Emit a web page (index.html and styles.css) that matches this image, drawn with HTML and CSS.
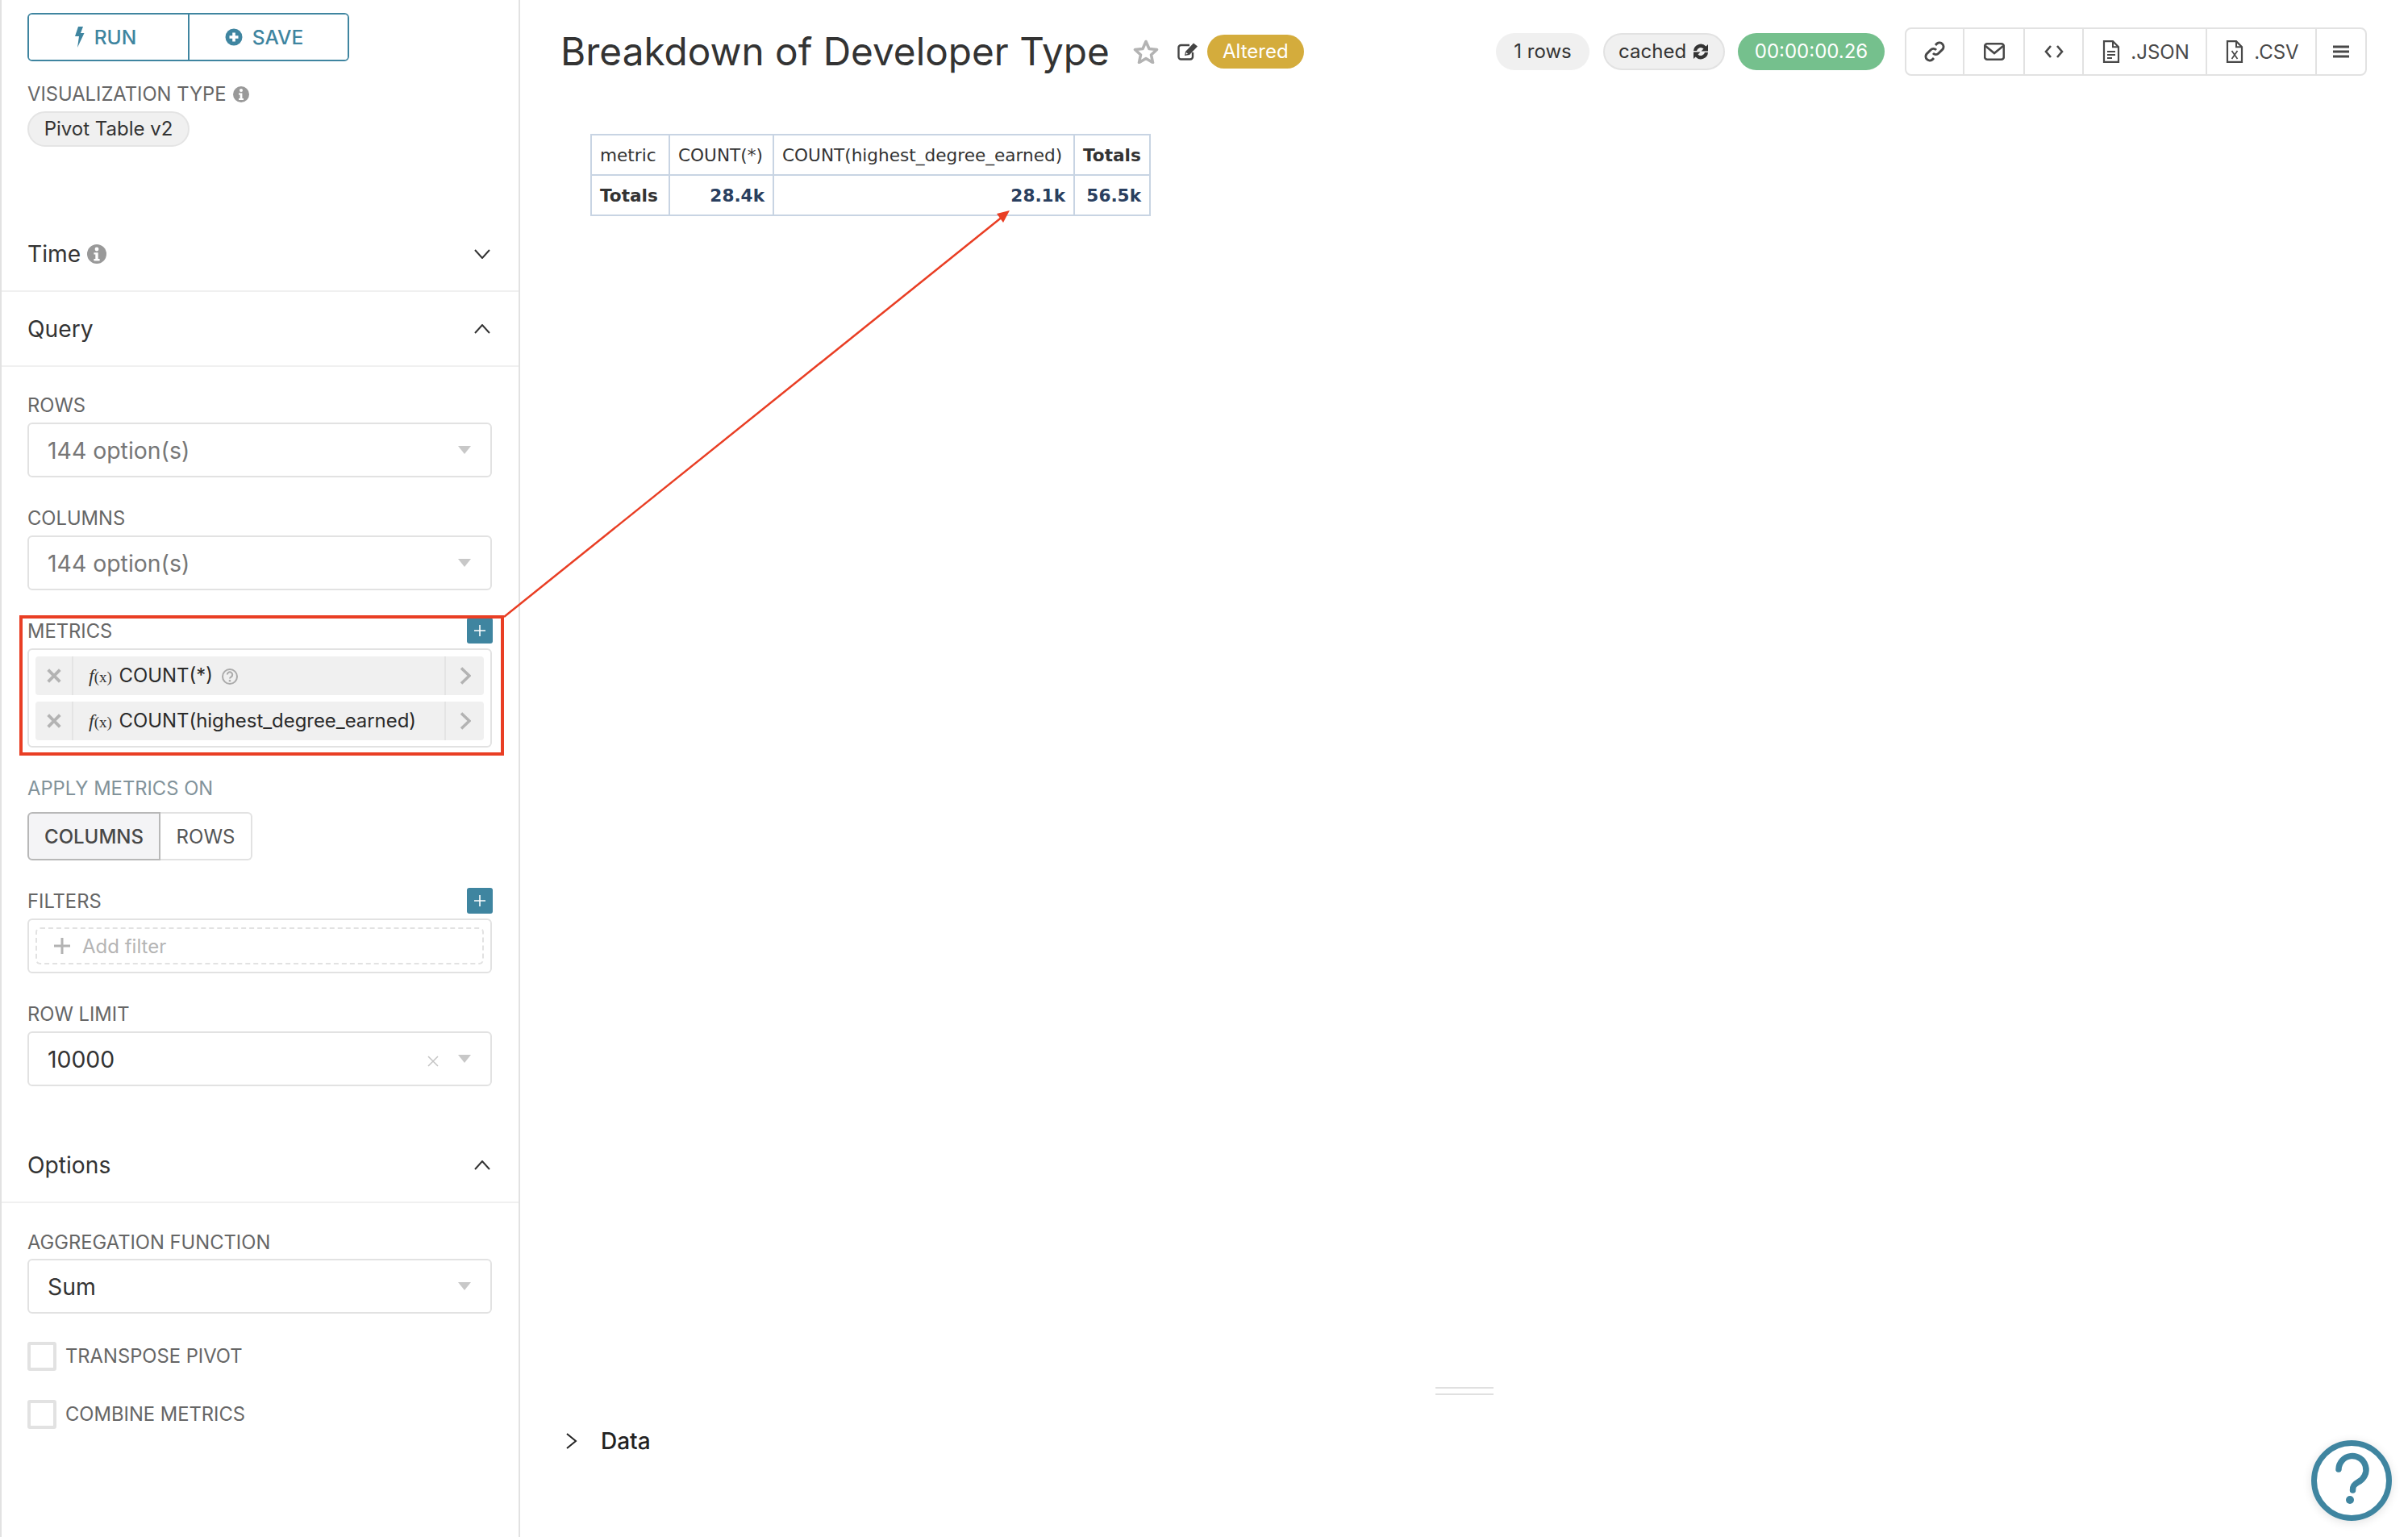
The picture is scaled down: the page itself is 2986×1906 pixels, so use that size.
FILE: index.html
```html
<!DOCTYPE html>
<html lang="en">
<head>
<meta charset="utf-8">
<title>Breakdown of Developer Type</title>
<link rel="stylesheet" href="styles.css">
</head>
<body>
<div class="app">
  <aside class="sidebar">
    <div class="run-group">
      <button class="run-btn run-btn-run">
        <svg class="i-bolt" viewBox="0 0 14 28"><path d="M6 1 L12 1 L9 9 L13.500 9 L5 27 L7 13 L2 13 Z" fill="#3f85a0"/></svg>
        RUN
      </button>
      <button class="run-btn run-btn-save">
        <svg class="i-plus-c" viewBox="0 0 22 22"><circle cx="11" cy="11" r="10.500" fill="#3f85a0"/><path d="M11 5.500v11M5.500 11h11" stroke="#fff" stroke-width="3.600"/></svg>
        SAVE
      </button>
    </div>

    <div class="viz">
      <div class="label">VISUALIZATION TYPE
        <svg class="i-info" viewBox="0 0 20 20"><circle cx="10" cy="10" r="10" fill="#999"/><circle cx="10" cy="5" r="2" fill="#fff"/><path d="M7 8.500h4.400v6.500h1.600v2H7v-2h1.600v-4.500H7z" fill="#fff"/></svg>
      </div>
      <div class="chip">Pivot Table v2</div>
    </div>

    <div class="section-head time-head">
      <span class="section-title">Time <svg class="i-info i-info-lg" viewBox="0 0 20 20"><circle cx="10" cy="10" r="10" fill="#999"/><circle cx="10" cy="5" r="2" fill="#fff"/><path d="M7 8.500h4.400v6.500h1.600v2H7v-2h1.600v-4.500H7z" fill="#fff"/></svg></span>
      <svg class="i-chev" viewBox="0 0 20 12"><path d="M1 1l9 10 9-10" fill="none" stroke="#333" stroke-width="2"/></svg>
    </div>
    <div class="section-head">
      <span class="section-title">Query</span>
      <svg class="i-chev" viewBox="0 0 20 12"><path d="M1 11l9-10 9 10" fill="none" stroke="#333" stroke-width="2"/></svg>
    </div>

    <div class="section-body query-body">
      <div class="field">
        <div class="label">ROWS</div>
        <div class="select muted"><span>144 option(s)</span><i class="caret"></i></div>
      </div>
      <div class="field">
        <div class="label">COLUMNS</div>
        <div class="select muted"><span>144 option(s)</span><i class="caret"></i></div>
      </div>
      <div class="field field-plus">
        <div class="label-row">
          <div class="label">METRICS</div>
          <div class="plus-btn"><svg viewBox="0 0 16 16"><path d="M8 1v14M1 8h14" stroke="#fff" stroke-width="1.600"/></svg></div>
        </div>
        <div class="metric-box">
          <div class="metric">
            <div class="metric-x"><svg viewBox="0 0 16 16"><path d="M1.500 1.500l13 13M14.500 1.500l-13 13" stroke="#b3b3b3" stroke-width="3.400"/></svg></div>
            <div class="metric-name"><span class="fx"><em>f</em>(x)</span> COUNT(*)
              <svg class="i-help" viewBox="0 0 20 20"><circle cx="10" cy="10" r="9" fill="none" stroke="#aaa" stroke-width="2"/><path d="M6.800 7.600a3.200 3.200 0 1 1 4.900 2.700c-1 .6-1.700 1.100-1.700 2.300" fill="none" stroke="#aaa" stroke-width="2"/><circle cx="10" cy="15.200" r="1.300" fill="#aaa"/></svg>
            </div>
            <div class="metric-more"><svg viewBox="0 0 14 22"><path d="M2 1.500l10 9.500-10 9.500" fill="none" stroke="#b3b3b3" stroke-width="3.600"/></svg></div>
          </div>
          <div class="metric">
            <div class="metric-x"><svg viewBox="0 0 16 16"><path d="M1.500 1.500l13 13M14.500 1.500l-13 13" stroke="#b3b3b3" stroke-width="3.400"/></svg></div>
            <div class="metric-name"><span class="fx"><em>f</em>(x)</span> COUNT(highest_degree_earned)</div>
            <div class="metric-more"><svg viewBox="0 0 14 22"><path d="M2 1.500l10 9.500-10 9.500" fill="none" stroke="#b3b3b3" stroke-width="3.600"/></svg></div>
          </div>
        </div>
      </div>
      <div class="field field-apply">
        <div class="label label-blue">APPLY METRICS ON</div>
        <div class="toggle">
          <div class="toggle-item active">COLUMNS</div>
          <div class="toggle-item">ROWS</div>
        </div>
      </div>
      <div class="field field-plus">
        <div class="label-row">
          <div class="label">FILTERS</div>
          <div class="plus-btn"><svg viewBox="0 0 16 16"><path d="M8 1v14M1 8h14" stroke="#fff" stroke-width="1.600"/></svg></div>
        </div>
        <div class="filter-box">
          <div class="filter-add">
            <svg class="i-add" viewBox="0 0 20 20"><path d="M10 0v20M0 10h20" stroke="#b3b3b3" stroke-width="3"/></svg>
            Add filter
          </div>
        </div>
      </div>
      <div class="field">
        <div class="label">ROW LIMIT</div>
        <div class="select"><span>10000</span>
          <svg class="i-clear" viewBox="0 0 14 14"><path d="M1 1l12 12M13 1L1 13" stroke="#c4c4c4" stroke-width="1.500"/></svg>
          <i class="caret"></i></div>
      </div>
    </div>

    <div class="section-head">
      <span class="section-title">Options</span>
      <svg class="i-chev" viewBox="0 0 20 12"><path d="M1 11l9-10 9 10" fill="none" stroke="#333" stroke-width="2"/></svg>
    </div>

    <div class="section-body options-body">
      <div class="field">
        <div class="label label-tight">AGGREGATION FUNCTION</div>
        <div class="select"><span>Sum</span><i class="caret"></i></div>
      </div>
      <div class="check first"><i class="box"></i><span class="label">TRANSPOSE PIVOT</span></div>
      <div class="check"><i class="box"></i><span class="label">COMBINE METRICS</span></div>
    </div>
  </aside>

  <main class="main">
    <header class="head">
      <div class="head-left">
        <h1 class="title">Breakdown of Developer Type</h1>
        <svg class="i-star" viewBox="0 0 32 30"><path d="M16 2.500l4 9 9.500 1-7 6.500 2 9.500-8.500-5-8.500 5 2-9.500-7-6.500 9.500-1z" fill="none" stroke="#b3b3b3" stroke-width="3.600" stroke-linejoin="round"/></svg>
        <svg class="i-edit" viewBox="0 0 28 22"><path d="M19 12v5.500a3 3 0 0 1-3 3H4.500a3 3 0 0 1-3-3V6a3 3 0 0 1 3-3H15" fill="none" stroke="#444" stroke-width="2.400"/><path d="M9 16l1-5L20 .5l5 4L15 15z" fill="#444"/><path d="M10.500 14.500l.5-2.500 2 1.800z" fill="#fff"/></svg>
        <span class="altered">Altered</span>
      </div>
      <div class="head-right">
        <span class="pill pill-rows">1 rows</span>
        <span class="pill pill-cached">cached
          <svg class="i-refresh" viewBox="0 0 22 22"><path d="M2 10a9 9 0 0 1 15.500-5.500L20 2v8.500h-8.500l3-3A5 5 0 0 0 6 10zM20 12a9 9 0 0 1-15.500 5.500L2 20v-8.500h8.500l-3 3A5 5 0 0 0 16 12z" fill="#333"/></svg>
        </span>
        <span class="pill pill-time">00:00:00.26</span>
        <div class="actions">
          <div class="action a-link"><svg class="i-a" viewBox="0 0 26 26"><path d="M11 15a5 5 0 0 0 7 0l5-5a5 5 0 0 0-7-7l-2 2M15 11a5 5 0 0 0-7 0l-5 5a5 5 0 0 0 7 7l2-2" fill="none" stroke="#484848" stroke-width="3"/></svg></div>
          <div class="action a-mail"><svg class="i-a" viewBox="0 0 26 22"><rect x="1.200" y="1.200" width="23.600" height="19.600" rx="3" fill="none" stroke="#484848" stroke-width="2.600"/><path d="M2 4l11 9 11-9" fill="none" stroke="#484848" stroke-width="2.600"/></svg></div>
          <div class="action a-code"><svg class="i-code" viewBox="0 0 24 16"><path d="M8 1L2 8l6 7M16 1l6 7-6 7" fill="none" stroke="#484848" stroke-width="2.600"/></svg></div>
          <div class="action a-json"><svg class="i-file" viewBox="0 0 22 28"><path d="M2 1.200h11l7 7V26.800H2z" fill="none" stroke="#484848" stroke-width="2.200"/><path d="M13 1.200v7h7" fill="none" stroke="#484848" stroke-width="2"/><path d="M6 14h10M6 18h10M6 22h6" stroke="#484848" stroke-width="2"/></svg>.JSON</div>
          <div class="action a-csv"><svg class="i-file" viewBox="0 0 22 28"><path d="M2 1.200h11l7 7V26.800H2z" fill="none" stroke="#484848" stroke-width="2.200"/><path d="M13 1.200v7h7" fill="none" stroke="#484848" stroke-width="2"/><path d="M7.500 13l7 10M14.500 13l-7 10" stroke="#484848" stroke-width="1.700"/></svg>.CSV</div>
          <div class="action a-menu"><svg class="i-bars" viewBox="0 0 20 16"><path d="M0 2h20M0 8h20M0 14h20" stroke="#484848" stroke-width="3"/></svg></div>
        </div>
      </div>
    </header>

    <section class="chart">
      <table class="pivot">
        <tr><th class="c1">metric</th><th class="c2">COUNT(*)</th><th class="c3">COUNT(highest_degree_earned)</th><th class="strong c4">Totals</th></tr>
        <tr><th class="strong">Totals</th><td>28.4k</td><td>28.1k</td><td>56.5k</td></tr>
      </table>
    </section>

    <div class="resize"><i></i><i></i></div>
    <div class="data">
      <svg class="i-data" viewBox="0 0 14 20"><path d="M1 1l11 9-11 9" fill="none" stroke="#222" stroke-width="2"/></svg>
      <span>Data</span>
    </div>
  </main>
</div>

<div class="annot-box"></div>
<svg class="annot-arrow" viewBox="0 0 2986 1906"><path d="M625 765L1244 268" fill="none" stroke="#e93e24" stroke-width="2.500"/><path d="M1252 261L1236 265L1244 276Z" fill="#e93e24"/></svg>

<div class="help">
  <svg viewBox="0 0 100 100"><circle cx="50" cy="50" r="46.500" fill="#fff" stroke="#3f85a0" stroke-width="7"/><path d="M34 36a17 17 0 1 1 24 16c-5 3-6.500 5-6.500 10" fill="none" stroke="#3f85a0" stroke-width="7.500" stroke-linecap="round"/><circle cx="48" cy="74" r="5" fill="#3f85a0"/></svg>
</div>
</body>
</html>
```

FILE: styles.css
```css
* { box-sizing: border-box; }
html, body { margin: 0; padding: 0; background: #fff; }
body { width: 2986px; height: 1906px; overflow: hidden; font-family: Inter, "Liberation Sans", sans-serif; color: #333; position: relative; }
.app { display: flex; height: 1906px; }

/* sidebar */
.sidebar { width: 645px; flex: none; height: 1906px; border-left: 2px solid #e2e2e2; border-right: 2px solid #e2e2e2; padding-top: 16px; }
.run-group { margin-left: 32px; width: 399px; height: 60px; display: flex; border: 2px solid #3f85a0; border-radius: 6px; }
.run-btn { flex: none; height: 100%; background: #fff; border: 0; border-radius: 4px; color: #3f85a0; font: 500 24.5px Inter, sans-serif; display: flex; align-items: center; justify-content: center; gap: 12px; padding: 0; }
.run-btn-run { border-right: 2px solid #3f85a0; width: 199px; border-radius: 4px 0 0 4px; padding-right: 9px; }
.run-btn-save { width: 196px; border-radius: 0 4px 4px 0; padding-right: 11px; }
.i-bolt { width: 14px; height: 28px; }
.i-plus-c { width: 22px; height: 22px; }
.viz { margin: 26px 0 0 32px; height: 167px; }
.label { font-size: 23.75px; line-height: 30px; color: #666; font-weight: 400; white-space: nowrap; }
.i-info { width: 20px; height: 20px; vertical-align: -2px; margin-left: 2px; }
.i-info-lg { width: 24px; height: 24px; vertical-align: -2px; margin-left: 0; }
.chip { margin-top: 6px; width: 201px; height: 44px; border-radius: 22px; background: #f0f0f0; border: 2px solid #e4e4e4; font-size: 24px; line-height: 40px; color: #333; text-align: center; }
.section-head { height: 93px; border-bottom: 2px solid #f0f0f0; padding: 0 32px; display: flex; align-items: center; justify-content: space-between; }
.section-title { font-size: 28.2px; color: #333; }
.i-chev { width: 20px; height: 12px; margin-right: 3px; }
.section-body { padding: 0 32px; }
.query-body { padding-top: 33px; padding-bottom: 52px; }
.field { margin-bottom: 36px; }
.field:last-child { margin-bottom: 0; }
.field > .label { margin-bottom: 6px; }
.field-plus { margin-bottom: 36px; margin-top: -2px; }
.label-row { display: flex; justify-content: space-between; align-items: flex-end; height: 32px; margin-bottom: 6px; }
.plus-btn { width: 32px; height: 32px; background: #3f85a0; border-radius: 3px; display: flex; align-items: center; justify-content: center; }
.plus-btn svg { width: 16px; height: 16px; }
.select { height: 68px; width: 576px; border: 2px solid #e2e2e2; border-radius: 6px; display: flex; align-items: center; padding: 0 24px 0 23px; font-size: 28.4px; color: #333; position: relative; }
.select span { flex: 1; }
.select.muted { color: #777; }
.caret { width: 0; height: 0; border-left: 8px solid transparent; border-right: 8px solid transparent; border-top: 10px solid #c8c8c8; }
.i-clear { width: 14px; height: 14px; margin: 6px 24px 0 0; }
.metric-box { width: 576px; height: 123px; border: 2px solid #e2e2e2; border-radius: 6px; padding: 8px; display: flex; flex-direction: column; gap: 8px; }
.metric { height: 48px; background: #f0f0f0; border-radius: 4px; display: flex; align-items: stretch; }
.metric-x { width: 47px; border-right: 2px solid #e4e4e4; display: flex; align-items: center; justify-content: center; }
.metric-x svg { width: 18px; height: 18px; }
.metric-name { flex: 1; padding-left: 19px; font-size: 23.9px; line-height: 48px; color: #2a2a2a; white-space: nowrap; }
.fx { font-family: "Liberation Serif", serif; font-size: 19px; color: #333; margin-right: 2px; }
.fx em { font-size: 24px; }
.i-help { width: 20px; height: 20px; margin-left: 4px; vertical-align: -3px; }
.metric-more { width: 49px; border-left: 2px solid #e4e4e4; display: flex; align-items: center; justify-content: center; }
.metric-more svg { width: 14px; height: 22px; }
.field-apply { margin-top: 2px; margin-bottom: 36px; }
.field-apply > .label { margin-bottom: 14px; }
.label-blue { color: #82939b; }
.toggle { display: flex; width: 279px; height: 60px; }
.toggle-item { height: 60px; border: 2px solid #e2e2e2; font-size: 24px; display: flex; align-items: center; justify-content: center; color: #555; }
.toggle-item:first-child { width: 165px; border-radius: 6px 0 0 6px; }
.toggle-item:last-child { width: 114px; border-left: 0; border-radius: 0 6px 6px 0; }
.toggle-item.active { background: #f4f4f6; border-color: #b8b8b8; font-weight: 500; color: #484848; }
.filter-box { width: 576px; height: 68px; border: 2px solid #e2e2e2; border-radius: 6px; padding: 9px 8px; }
.filter-add { height: 46px; border: 2px dashed #e2e2e2; border-radius: 6px; display: flex; align-items: center; gap: 15px; padding-left: 21px; font-size: 24px; color: #b5b5b5; }
.i-add { width: 20px; height: 20px; }
.options-body { padding-top: 34px; }
.label-tight { margin-bottom: 5px !important; }
.field:has(.label-tight) { margin-bottom: 0; }
.check { display: flex; align-items: center; height: 36px; margin-top: 36px; gap: 11px; }
.check.first { margin-top: 35px; }
.box { width: 36px; height: 36px; border: 4px solid #e2e2e2; border-radius: 3px; flex: none; }

/* main */
.main { flex: 1; display: flex; flex-direction: column; height: 1906px; }
.head { display: flex; justify-content: space-between; align-items: center; margin-top: 34px; height: 60px; padding: 0 51px 0 50px; }
.head-left, .head-right { display: flex; align-items: center; }
.title { margin: 0; font-size: 47.7px; font-weight: 400; color: #333; white-space: nowrap; }
.i-star { width: 32px; height: 30px; margin-left: 29px; }
.i-edit { width: 28px; height: 22px; margin-left: 23px; }
.altered { margin-left: 9px; width: 120px; height: 42px; border-radius: 21px; background: #d4ac3c; color: #fff; font-size: 24px; line-height: 42px; text-align: center; }
.pill { height: 46px; border-radius: 23px; font-size: 24px; line-height: 46px; text-align: center; display: block; }
.pill-rows { width: 116px; background: #f0f0f0; color: #333; margin-right: 17px; }
.pill-cached { width: 151px; background: #f0f0f0; border: 2px solid #e2e2e2; line-height: 42px; color: #333; margin-right: 16px; white-space: nowrap; }
.i-refresh { width: 22px; height: 22px; vertical-align: -3px; }
.pill-time { width: 182px; background: #75c08d; color: #fff; margin-right: 25px; }
.actions { display: flex; height: 60px; border: 2px solid #e2e2e2; border-radius: 8px; }
.action { height: 100%; display: flex; align-items: center; justify-content: center; border-right: 2px solid #e2e2e2; font-size: 24px; color: #484848; gap: 13px; }
.action:last-child { border-right: 0; }
.a-link { width: 72px; }
.a-mail { width: 75px; }
.a-code { width: 73px; }
.a-json { width: 153px; padding-left: 3px; }
.a-csv { width: 136px; padding-left: 3px; }
.a-menu { width: 60px; }
.i-a { width: 26px; height: 26px; }
.i-code { width: 24px; height: 16px; }
.i-file { width: 22px; height: 28px; }
.i-bars { width: 20px; height: 16px; }

.chart { flex: 1; padding: 72px 0 0 87px; }
.pivot { border-collapse: collapse; font-family: "DejaVu Sans", Verdana, sans-serif; font-size: 21.6px; color: #333; }
.pivot th, .pivot td { border: 2px solid #c8d4e3; height: 50px; padding: 0 10px; white-space: nowrap; }
.pivot th { font-weight: 400; text-align: left; }
.pivot th.strong { font-weight: 700; }
.pivot td { font-weight: 700; color: #2a3f5f; text-align: right; }
.c1 { width: 97px; }
.c2 { width: 129px; }
.c3 { width: 373px; }
.c4 { width: 94px; }
.resize { width: 72px; margin-left: 1135px; height: 10px; display: flex; flex-direction: column; justify-content: space-between; }
.resize i { height: 2px; background: #e0e0e0; display: block; }
.data { height: 176px; padding: 42px 0 0 57px; display: flex; align-items: flex-start; gap: 29px; font-size: 28px; line-height: 30px; font-weight: 500; color: #222; }
.i-data { width: 14px; height: 20px; margin-top: 5px; }

/* annotation overlay */
.annot-box { position: absolute; left: 24px; top: 763px; width: 601px; height: 174px; border: 4px solid #e93e24; pointer-events: none; }
.annot-arrow { position: absolute; left: 0; top: 0; width: 2986px; height: 1906px; pointer-events: none; }
.help { position: absolute; left: 2866px; top: 1786px; width: 100px; height: 100px; border-radius: 50%; box-shadow: 0 2px 12px rgba(0,0,0,.12); }
.help svg { display: block; width: 100px; height: 100px; }
```
